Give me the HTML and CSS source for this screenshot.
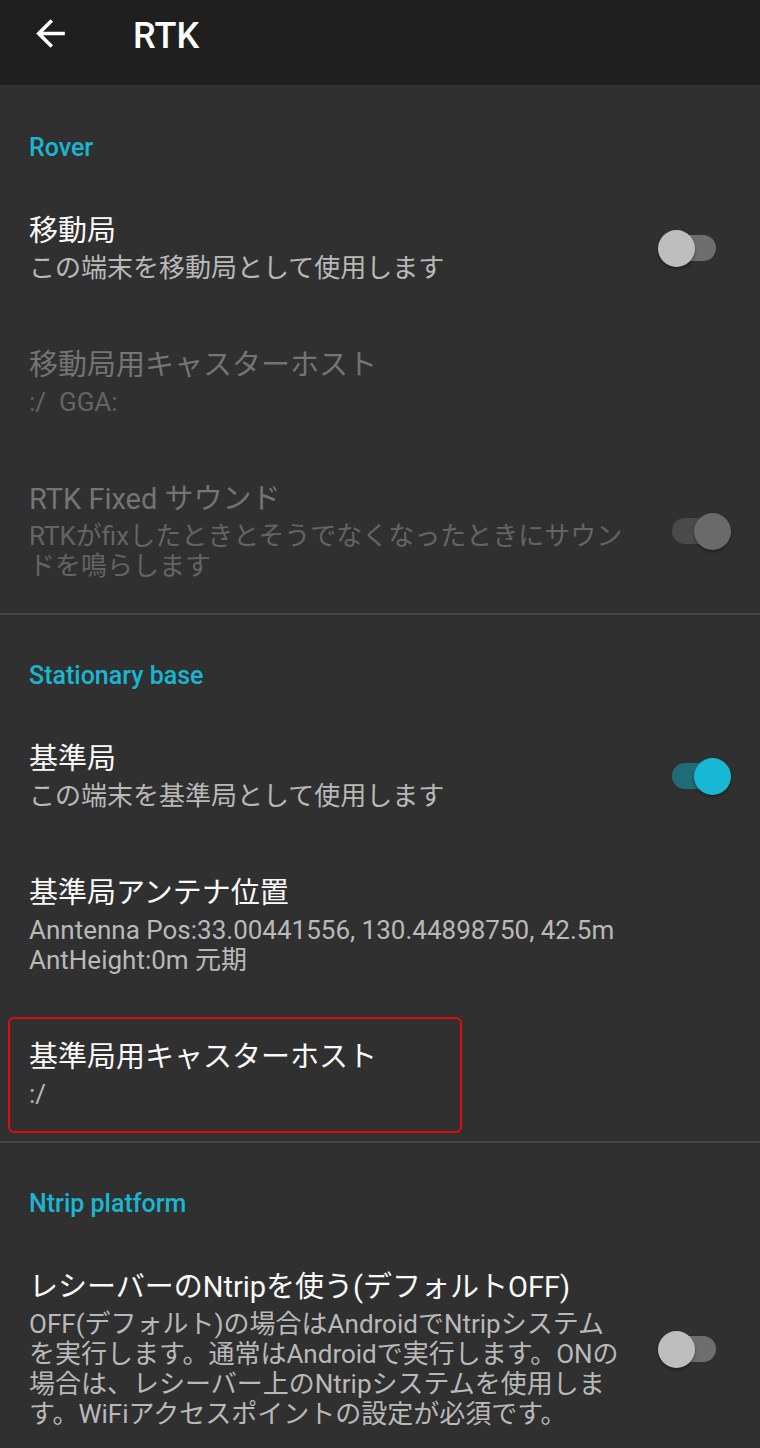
FILE: index.html
```html
<!DOCTYPE html>
<html lang="ja">
<head>
  <meta charset="UTF-8">
  <meta name="viewport" content="width=device-width, initial-scale=1.0">
  <title>RTK</title>
  <link rel="stylesheet" href="styles.css">
</head>
<body>
  <header class="toolbar">
    <svg class="back" viewBox="0 0 24 24"><path d="M20 11H7.83l5.59-5.59L12 4l-8 8 8 8 1.41-1.41L7.83 13H20v-2z"/></svg>
    <h1>RTK</h1>
  </header>

  <main class="settings">
    <section class="group">
      <h2 class="group-title">Rover</h2>

      <div class="pref">
        <div class="pref-text">
          <div class="title">移動局</div>
          <div class="summary">この端末を移動局として使用します</div>
        </div>
        <div class="widget">
          <div class="switch off"><span class="track"></span><span class="thumb"></span></div>
        </div>
      </div>

      <div class="pref disabled">
        <div class="pref-text">
          <div class="title">移動局用キャスターホスト</div>
          <div class="summary">:/&nbsp; GGA:</div>
        </div>
      </div>

      <div class="pref disabled">
        <div class="pref-text">
          <div class="title">RTK Fixed サウンド</div>
          <div class="summary">RTKがfixしたときとそうでなくなったときにサウンドを鳴らします</div>
        </div>
        <div class="widget">
          <div class="switch on"><span class="track"></span><span class="thumb"></span></div>
        </div>
      </div>
    </section>

    <section class="group">
      <h2 class="group-title">Stationary base</h2>

      <div class="pref">
        <div class="pref-text">
          <div class="title">基準局</div>
          <div class="summary">この端末を基準局として使用します</div>
        </div>
        <div class="widget">
          <div class="switch on"><span class="track"></span><span class="thumb"></span></div>
        </div>
      </div>

      <div class="pref">
        <div class="pref-text">
          <div class="title">基準局アンテナ位置</div>
          <div class="summary">
            <span class="line">Anntenna Pos:33.00441556, 130.44898750, 42.5m</span>
            <span class="line">AntHeight:0m 元期</span>
          </div>
        </div>
      </div>

      <div class="pref marked">
        <div class="pref-text">
          <div class="title">基準局用キャスターホスト</div>
          <div class="summary">:/</div>
        </div>
        <span class="mark"></span>
      </div>
    </section>

    <section class="group">
      <h2 class="group-title">Ntrip platform</h2>

      <div class="pref">
        <div class="pref-text">
          <div class="title">レシーバーのNtripを使う(デフォルトOFF)</div>
          <div class="summary">OFF(デフォルト)の場合はAndroidでNtripシステムを実行します。通常はAndroidで実行します。ONの場合は、レシーバー上のNtripシステムを使用します。WiFiアクセスポイントの設定が必須です。</div>
        </div>
        <div class="widget">
          <div class="switch off"><span class="track"></span><span class="thumb"></span></div>
        </div>
      </div>
    </section>
  </main>
</body>
</html>
```

FILE: styles.css
```css
body {
  margin: 0;
  width: 760px;
  height: 1448px;
  overflow: hidden;
  background-color: #303030;
  color: #fafafa;
  font-family: Roboto, "Noto Sans CJK JP", sans-serif;
}

/* top app bar */
.toolbar {
  height: 85px;
  box-sizing: border-box;
  padding: 12px 0 0 29px;
  display: flex;
  align-items: flex-start;
  background-color: #1f1f1f;
}
.back {
  width: 43px;
  height: 43px;
  fill: #ffffff;
}
.toolbar h1 {
  margin: 3px 0 0 61px;
  font-size: 36px;
  font-weight: 500;
  line-height: 43px;
  color: #ffffff;
}

/* preference list */
.settings {
  padding-top: 2px;
}
.group + .group {
  border-top: 2px solid #464646;
}
.group-title {
  margin: 0;
  padding: 46px 30px 18px 29px;
  font-size: 25px;
  font-weight: 500;
  line-height: 30px;
  color: #19b6d2;
}
.pref {
  position: relative;
  display: flex;
  align-items: center;
  padding: 32px 0 32px 29px;
}
.pref-text {
  flex: 1;
  min-width: 0;
}
.title {
  font-size: 29px;
  line-height: 36px;
  color: #fafafa;
}
.summary {
  margin-top: 4px;
  font-size: 26px;
  line-height: 30px;
  color: #b9b9b9;
}
.summary .line {
  display: block;
  white-space: nowrap;
}
.pref.disabled .title {
  color: #747474;
}
.pref.disabled .summary {
  color: #646464;
}
.widget {
  flex: none;
  width: 135px;
  display: flex;
  justify-content: flex-end;
}

/* red frame drawn round the selected row */
.mark {
  position: absolute;
  left: 8px;
  top: 10px;
  width: 454px;
  height: 116px;
  box-sizing: border-box;
  border: 2px solid #e00d0d;
  border-radius: 6px;
}

/* switches */
.switch {
  position: relative;
  width: 53px;
  height: 37px;
  margin-right: 35px;
}
.switch.off {
  margin-right: 44px;
}
.switch .track {
  position: absolute;
  left: 0;
  right: 0;
  top: 5.5px;
  height: 26px;
  border-radius: 13px;
  background-color: #1f6b76;
}
.switch .thumb {
  position: absolute;
  top: 0;
  right: -5.5px;
  width: 37px;
  height: 37px;
  border-radius: 50%;
  background-color: #17b8d4;
  box-shadow: 0 2px 3px rgba(0, 0, 0, 0.35);
}
.switch.off .track {
  background-color: #6e6e6e;
}
.switch.off .thumb {
  right: auto;
  left: -5.5px;
  background-color: #bebebe;
}
.disabled .switch .track {
  background-color: #4a4a4a;
}
.disabled .switch .thumb {
  background-color: #6a6a6a;
}
```
